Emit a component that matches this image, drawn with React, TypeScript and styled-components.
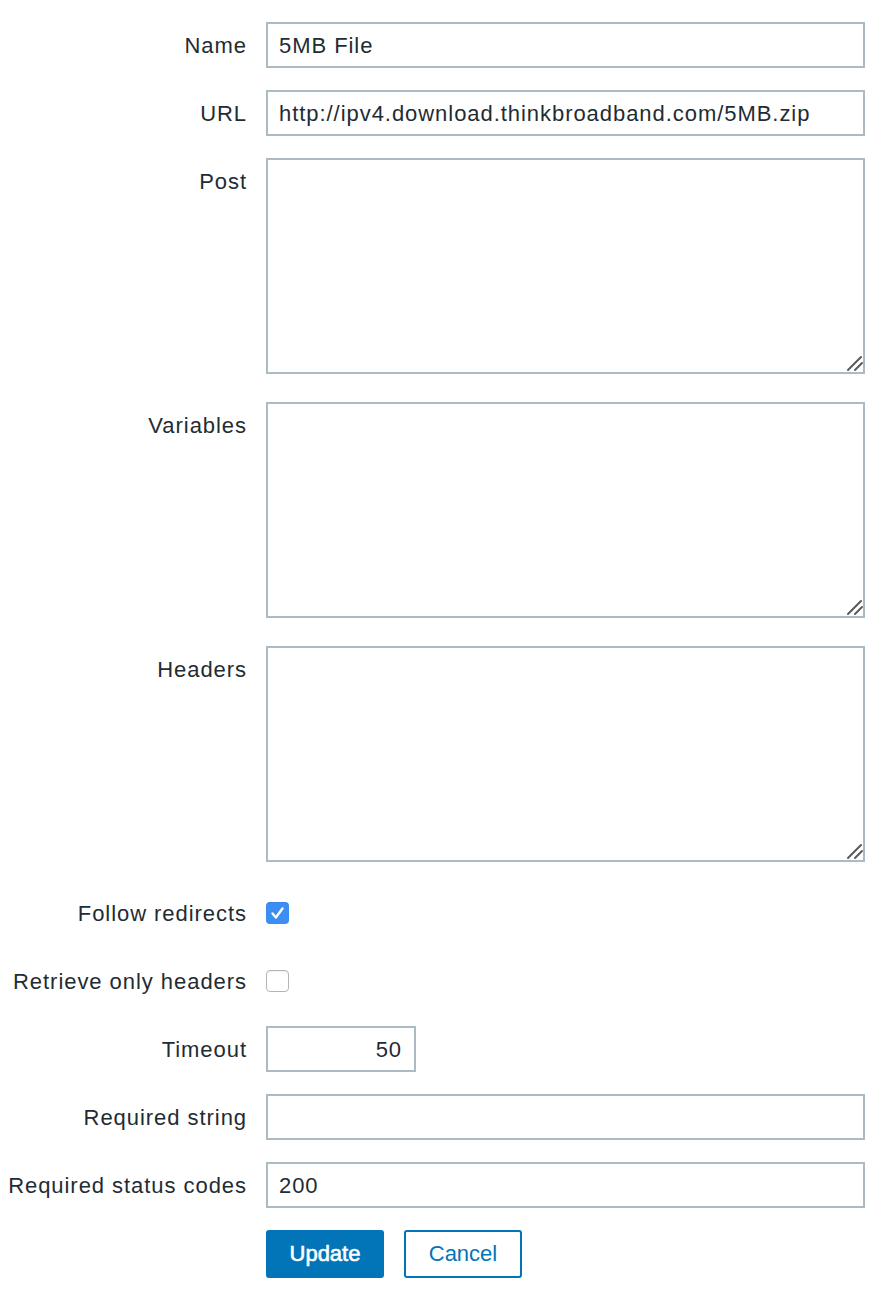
import React from "react";
import styled, { createGlobalStyle } from "styled-components";

const fields = [
  { label: "Name", value: "5MB File" },
  { label: "URL", value: "http://ipv4.download.thinkbroadband.com/5MB.zip" },
];

const areas = ["Post", "Variables", "Headers"];

export default function App() {
  return (
    <>
      <GlobalStyle />
      <Form onSubmit={(e) => e.preventDefault()}>
        {fields.map((f) => (
          <Row key={f.label}>
            <Label>{f.label}</Label>
            <Input defaultValue={f.value} />
          </Row>
        ))}
        {areas.map((a) => (
          <Row key={a} $gap={28}>
            <Label>{a}</Label>
            <AreaWrap>
              <TextArea />
              <Grip width="18" height="17" viewBox="0 0 18 17">
                <path d="M2 15L15 2M9 15l7-7" stroke="#5b5b5b" strokeWidth="2" strokeLinecap="round" />
              </Grip>
            </AreaWrap>
          </Row>
        ))}
        <Row>
          <Label>Follow redirects</Label>
          <CheckCell>
            <Check type="checkbox" defaultChecked />
          </CheckCell>
        </Row>
        <Row>
          <Label>Retrieve only headers</Label>
          <CheckCell>
            <Check type="checkbox" />
          </CheckCell>
        </Row>
        <Row>
          <Label>Timeout</Label>
          <Input defaultValue="50" $narrow />
        </Row>
        <Row>
          <Label>Required string</Label>
          <Input defaultValue="" />
        </Row>
        <Row>
          <Label>Required status codes</Label>
          <Input defaultValue="200" />
        </Row>
        <Row>
          <span />
          <Buttons>
            <Button type="submit">Update</Button>
            <Button type="button" $outline>
              Cancel
            </Button>
          </Buttons>
        </Row>
      </Form>
    </>
  );
}

//*Styles

const GlobalStyle = createGlobalStyle`
  body {
    margin: 0;
    background: #fff;
    font-family: "Liberation Sans", Arial, sans-serif;
    color: #1f2c33;
  }
`;

const Form = styled.form`
  display: flex;
  flex-direction: column;
  padding: 22px 29px 0 0;
`;

const Row = styled.div<{ $gap?: number }>`
  display: grid;
  grid-template-columns: 246px 1fr;
  column-gap: 20px;
  align-items: start;
  margin-bottom: ${(p) => p.$gap ?? 22}px;
`;

const Label = styled.label`
  text-align: right;
  font-size: 22px;
  letter-spacing: 0.95px;
  line-height: 44px;
  padding-top: 2px;
  margin-right: -1px;
  white-space: nowrap;
  color: #1f2c33;
`;

const Input = styled.input<{ $narrow?: boolean }>`
  box-sizing: border-box;
  width: ${(p) => (p.$narrow ? "150px" : "100%")};
  height: 46px;
  margin: 0;
  padding: 1px 12px 0 11px;
  border: 2px solid #acbbc2;
  border-radius: 0;
  font-family: inherit;
  font-size: 22px;
  letter-spacing: 0.95px;
  color: #1f2c33;
  text-align: ${(p) => (p.$narrow ? "right" : "left")};
  outline: none;
`;

const AreaWrap = styled.div`
  position: relative;
`;

const TextArea = styled.textarea`
  display: block;
  box-sizing: border-box;
  width: 100%;
  height: 216px;
  margin: 0;
  padding: 10px 12px;
  border: 2px solid #acbbc2;
  border-radius: 0;
  font-family: inherit;
  font-size: 22px;
  color: #1f2c33;
  resize: none;
  outline: none;
`;

const Grip = styled.svg`
  position: absolute;
  right: 1px;
  bottom: 2px;
  pointer-events: none;
`;

const CheckCell = styled.div`
  height: 46px;
  display: flex;
  align-items: center;
`;

const Check = styled.input`
  appearance: none;
  box-sizing: border-box;
  width: 23px;
  height: 22px;
  margin: 0;
  border: 1px solid #b4b4b4;
  border-radius: 4px;
  background: #fff;
  box-shadow: inset 0 1px 1px rgba(0, 0, 0, 0.06);

  &:checked {
    border: none;
    background: #3b8ef2
      url("data:image/svg+xml;utf8,<svg xmlns='http://www.w3.org/2000/svg' width='23' height='22' viewBox='0 0 23 22'><path d='M6.5 11.5l3.4 4L16.5 6.5' fill='none' stroke='white' stroke-width='2.4' stroke-linecap='round' stroke-linejoin='round'/></svg>")
      no-repeat center;
  }
`;

const Buttons = styled.div`
  display: flex;
  gap: 20px;
`;

const Button = styled.button<{ $outline?: boolean }>`
  box-sizing: border-box;
  width: 118px;
  height: 48px;
  padding: 0;
  border-radius: 3px;
  border: 2px solid #0275b8;
  background: ${(p) => (p.$outline ? "#fff" : "#0275b8")};
  color: ${(p) => (p.$outline ? "#0275b8" : "#fff")};
  font-family: inherit;
  font-size: 22px;
  -webkit-text-stroke: ${(p) => (p.$outline ? "0" : "0.6px #fff")};
  cursor: pointer;
`;
